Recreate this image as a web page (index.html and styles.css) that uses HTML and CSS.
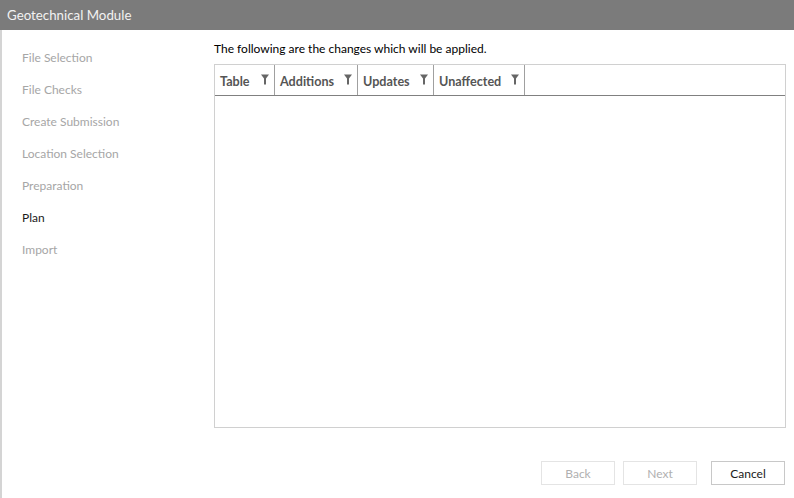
FILE: index.html
```html
<!DOCTYPE html>
<html lang="en">
<head>
  <meta charset="UTF-8" />
  <title>Geotechnical Module</title>
  <link rel="stylesheet" href="styles.css">
</head>
<body>
  <div class="titlebar">Geotechnical Module</div>

  <div class="window">
    <ul class="steps">
      <li>File Selection</li>
      <li>File Checks</li>
      <li>Create Submission</li>
      <li>Location Selection</li>
      <li>Preparation</li>
      <li class="current">Plan</li>
      <li>Import</li>
    </ul>

    <div class="content">
      <div class="intro">The following are the changes which will be applied.</div>
      <div class="grid">
        <div class="grid-head">
          <div class="col col-table">Table <svg class="filter" viewBox="0 0 8 10"><path d="M0 0H8L5 4V10H3V4Z"/></svg></div>
          <div class="col col-add">Additions <svg class="filter" viewBox="0 0 8 10"><path d="M0 0H8L5 4V10H3V4Z"/></svg></div>
          <div class="col col-upd">Updates <svg class="filter" viewBox="0 0 8 10"><path d="M0 0H8L5 4V10H3V4Z"/></svg></div>
          <div class="col col-unaff">Unaffected <svg class="filter" viewBox="0 0 8 10"><path d="M0 0H8L5 4V10H3V4Z"/></svg></div>
        </div>
        <div class="grid-body"></div>
      </div>

      <div class="buttons">
        <button class="btn" disabled>Back</button>
        <button class="btn" disabled>Next</button>
        <button class="btn cancel">Cancel</button>
      </div>
    </div>
  </div>
</body>
</html>
```

FILE: styles.css
```css
body {
  margin: 0;
  width: 794px;
  height: 498px;
  overflow: hidden;
  font-family: "Lato", "Noto Sans", sans-serif;
  font-size: 12px;
  background: #fff;
  color: #000;
}

.titlebar {
  height: 30px;
  line-height: 30px;
  background: #7b7b7b;
  color: #f2f2f2;
  font-size: 13.3px;
  padding-left: 7px;
}

.window {
  display: flex;
  height: 468px;
  border-left: 2px solid #d4d4d4;
}

.steps {
  list-style: none;
  margin: 0;
  padding: 20px 0 0 20px;
  width: 192px;
  color: #a6a6a6;
}

.steps li {
  height: 32px;
  line-height: 16px;
}

.steps li.current {
  color: #1a1a1a;
}

.content {
  display: flex;
  flex-direction: column;
  width: 572px;
}

.intro {
  padding-top: 11px;
  height: 23px;
  line-height: 16px;
}

.grid {
  border: 1px solid #d0d0d0;
  height: 362px;
  display: flex;
  flex-direction: column;
}

.grid-head {
  display: flex;
  height: 30px;
  border-bottom: 1px solid #808080;
}

.col {
  display: flex;
  align-items: center;
  justify-content: space-between;
  padding: 2px 5px 0 5px;
  border-right: 1px solid #a0a0a0;
  font-weight: bold;
  font-size: 12.6px;
  color: #555;
}

.col-table { width: 49px; }
.col-add { width: 72px; }
.col-upd { width: 65px; }
.col-unaff { width: 80px; }

.filter {
  width: 8px;
  height: 11px;
  fill: #666;
  margin-bottom: 3px;
}

.buttons {
  display: flex;
  justify-content: flex-end;
  gap: 8px;
  margin-top: 33px;
  padding-right: 1px;
}

.btn {
  width: 74px;
  height: 24px;
  background: #fff;
  border: 1px solid #c8c8c8;
  font-family: inherit;
  font-size: 12px;
  color: #1a1a1a;
  padding: 0;
}

.btn:disabled {
  color: #b0b0b0;
  border-color: #e4e4e4;
}

.cancel {
  margin-left: 6px;
}
```
